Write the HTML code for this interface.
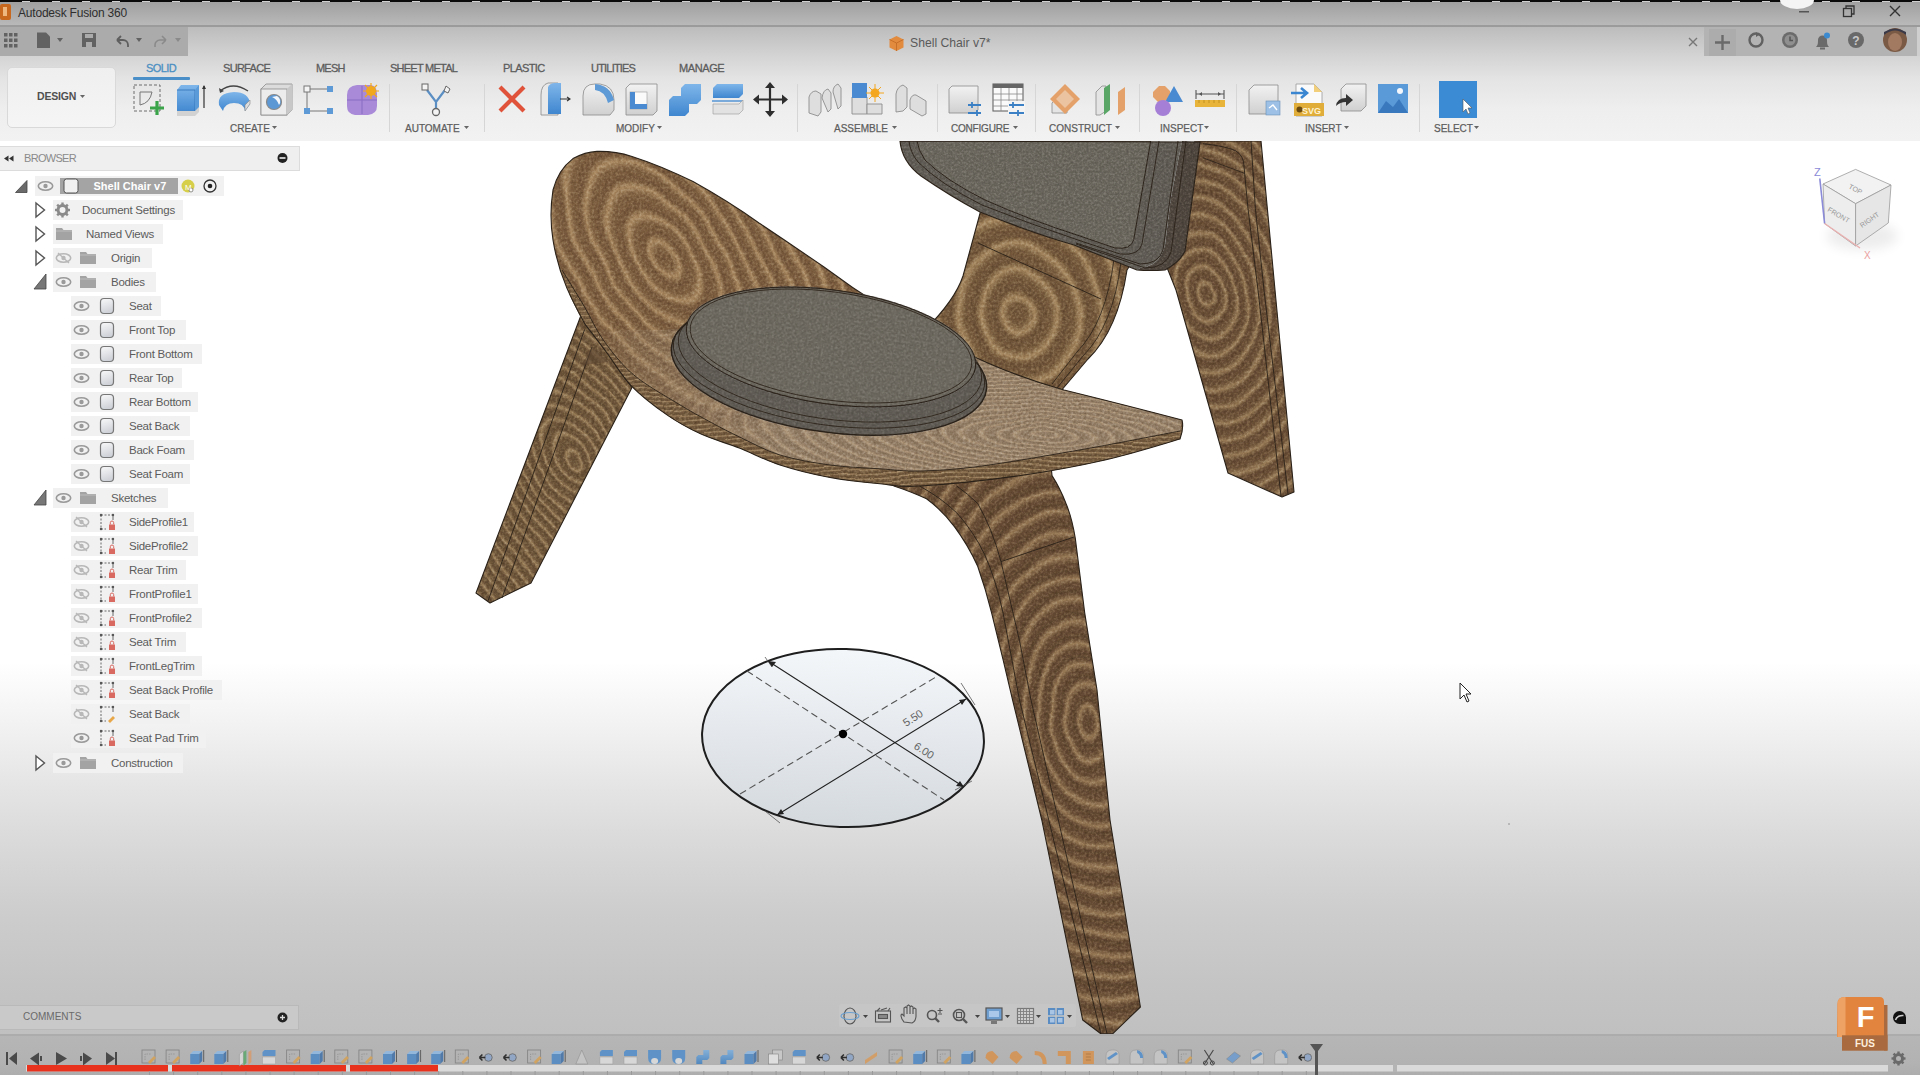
<!DOCTYPE html>
<html><head><meta charset="utf-8"><style>
*{box-sizing:border-box}
body{margin:0;width:1920px;height:1075px;overflow:hidden;position:relative;font-family:"Liberation Sans",sans-serif;background:#fff;color:#555}
.a{position:absolute}
.t{position:absolute;white-space:nowrap;line-height:1}
.tab{font-size:11px;color:#5c5c5c;top:62.5px;letter-spacing:-0.5px;-webkit-text-stroke:0.3px #5c5c5c}
.gl{font-size:10px;color:#5e5e5e;top:123.5px;-webkit-text-stroke:0.25px #5e5e5e}
.sep{position:absolute;width:1px;background:#d6d6d6;top:84px;height:48px}
.row{position:absolute;height:19px;background:rgba(226,226,226,0.55)}
.lbl{position:absolute;font-size:11px;color:#555;line-height:1;white-space:nowrap}
</style></head><body>
<div class="a" style="left:0;top:140px;width:1920px;height:895px;background:linear-gradient(to bottom,#ffffff 0px,#ffffff 522px,#f3f3f3 580px,#e6e6e6 640px,#dadada 700px,#cdcdcd 772px,#c4c4c4 845px,#c0c0c0 895px)"></div>
<svg class="a" style="left:0;top:0" width="1920" height="1075" viewBox="0 0 1920 1075">
<defs>
<path id="p_rear" d="M1195 141L1261 141L1275 290L1294 492L1282 497L1228 473L1176 290L1160 250Z"/>
<clipPath id="c_rear"><use href="#p_rear"/></clipPath>
<path id="p_mid" d="M985 195L1140 250L1127 270Q1118 330 1088 359L1060 392L1000 405L925 330Q955 300 963 276Z"/>
<clipPath id="c_mid"><use href="#p_mid"/></clipPath>
<path id="p_cushB" d="M900 141Q902 162 921 176Q950 196 980 212Q1030 232 1074 245L1137 270Q1150 271 1165 270Q1180 262 1185 251L1200 142Z"/>
<clipPath id="c_cushB"><use href="#p_cushB"/></clipPath>
<path id="p_front" d="M885 465L894 486Q912 492 926.5 498.8Q942 510 954.4 526.7Q968 545 977.7 566.3Q986 590 991.6 612.8L1003 659.3L1012.6 700L1041.8 820L1082.7 1020L1100.9 1033.8L1112.6 1033.8L1140.4 1007L1110 820L1097 690L1084.7 612.8L1075.3 538.4Q1072 518 1066 503.5Q1060 488 1052 475.6L1050 455Z"/>
<clipPath id="c_front"><use href="#p_front"/></clipPath>
<path id="p_left" d="M583 310L476 593L490 603L531 583L632 387.6L607 350Z"/>
<clipPath id="c_left"><use href="#p_left"/></clipPath>
<path id="p_seat" d="M597 151.4Q615 151 632 156.4Q662 166 693 181.6Q728 201 759 223Q792 245 824 267Q852 288 881 306Q903 318 925 322L960 350Q1010 375 1064 390Q1125 405 1182 420Q1184 428 1180 439C1167.5 442.5 1131.8 453.9 1105.0 460.0 C1078.2 466.1 1049.8 471.4 1019.0 475.7 C988.2 480.0 943.2 484.6 920.0 486.0 C896.8 487.4 895.0 485.2 880.0 483.8 C865.0 482.4 846.7 480.6 830.0 477.5 C813.3 474.4 795.0 469.9 780.0 465.0 C765.0 460.1 753.2 453.5 740.0 448.3 C726.8 443.1 712.7 439.4 700.5 433.8 C688.3 428.2 678.5 422.9 667.0 414.9 C655.5 406.9 641.3 396.1 631.3 385.8 C621.3 375.5 614.8 363.4 607.0 353.0 C599.2 342.6 588.3 328.5 584.6 323.6Q572 300 566.8 287.9Q557 265 553 240Q549 215 553 190Q558 170 573 158.6Q585 152 597 151.4Z"/>
<clipPath id="c_seat"><use href="#p_seat"/></clipPath>
<path id="p_band" d="M1182 420Q1184 428 1180 439C1167.5 442.5 1131.8 453.9 1105.0 460.0 C1078.2 466.1 1049.8 471.4 1019.0 475.7 C988.2 480.0 943.2 484.6 920.0 486.0 C896.8 487.4 895.0 485.2 880.0 483.8 C865.0 482.4 846.7 480.6 830.0 477.5 C813.3 474.4 795.0 469.9 780.0 465.0 C765.0 460.1 753.2 453.5 740.0 448.3 C726.8 443.1 712.7 439.4 700.5 433.8 C688.3 428.2 678.5 422.9 667.0 414.9 C655.5 406.9 641.3 396.1 631.3 385.8 C621.3 375.5 614.8 363.4 607.0 353.0 C599.2 342.6 590.8 333.1 584.6 323.6 C578.4 314.1 572.4 300.6 570.0 296.0L562 270C565.8 276.2 577.7 295.3 584.6 307.0 C591.5 318.7 595.1 328.7 603.3 340.0 C611.4 351.3 621.0 364.1 633.5 374.7 C646.0 385.3 665.0 395.7 678.0 403.7 C691.0 411.7 701.3 417.1 711.6 422.7 C721.9 428.3 728.6 431.8 740.0 437.2 C751.4 442.6 765.0 450.4 780.0 455.0 C795.0 459.6 813.3 462.7 830.0 465.0 C846.7 467.3 865.0 467.8 880.0 468.8 C895.0 469.8 903.0 471.5 920.0 471.0 C937.0 470.5 954.5 469.7 982.0 466.0 C1009.5 462.3 1052.0 454.8 1085.0 449.0 C1118.0 443.2 1164.2 434.0 1180.0 431.0Z"/>
<clipPath id="c_band"><use href="#p_band"/></clipPath>
<path id="p_seatTop" d="M1182 420L1180 431C1164.2 434.0 1118.0 443.2 1085.0 449.0 C1052.0 454.8 1009.5 462.3 982.0 466.0 C954.5 469.7 937.0 470.5 920.0 471.0 C903.0 471.5 895.0 469.8 880.0 468.8 C865.0 467.8 846.7 467.3 830.0 465.0 C813.3 462.7 795.0 459.6 780.0 455.0 C765.0 450.4 751.4 442.6 740.0 437.2 C728.6 431.8 721.9 428.3 711.6 422.7 C701.3 417.1 691.0 411.7 678.0 403.7 C665.0 395.7 646.0 385.3 633.5 374.7 C621.0 364.1 611.4 351.3 603.3 340.0 C595.1 328.7 591.5 318.7 584.6 307.0 C577.7 295.3 565.8 276.2 562.0 270.0L700 280L960 350Q1010 375 1064 390Q1125 405 1182 420Z"/>
<clipPath id="c_seatTop"><use href="#p_seatTop"/></clipPath>
<radialGradient id="gSeat" gradientUnits="userSpaceOnUse" cx="0" cy="0" r="30" spreadMethod="repeat" gradientTransform="translate(664 258) rotate(55) scale(1 0.5)">
<stop offset="0" stop-color="#76583b"/><stop offset="0.42" stop-color="#7f6041"/><stop offset="0.7" stop-color="#ab8b63"/><stop offset="0.92" stop-color="#7f6041"/><stop offset="1" stop-color="#76583b"/></radialGradient>
<radialGradient id="gSeatR" gradientUnits="userSpaceOnUse" cx="0" cy="0" r="18" spreadMethod="repeat" gradientTransform="translate(1046 436) rotate(3) scale(1 0.22)">
<stop offset="0" stop-color="#8c765f"/><stop offset="0.42" stop-color="#957f67"/><stop offset="0.7" stop-color="#ae977a"/><stop offset="0.92" stop-color="#957f67"/><stop offset="1" stop-color="#8c765f"/></radialGradient>
<radialGradient id="gBand" gradientUnits="userSpaceOnUse" cx="0" cy="0" r="22" spreadMethod="repeat" gradientTransform="translate(1010 600) rotate(0) scale(1 0.2)">
<stop offset="0" stop-color="#6a5238"/><stop offset="0.42" stop-color="#735a3e"/><stop offset="0.7" stop-color="#a08460"/><stop offset="0.92" stop-color="#735a3e"/><stop offset="1" stop-color="#6a5238"/></radialGradient>
<radialGradient id="gRear" gradientUnits="userSpaceOnUse" cx="0" cy="0" r="17" spreadMethod="repeat" gradientTransform="translate(1205 294) rotate(80) scale(1 0.65)">
<stop offset="0" stop-color="#654b34"/><stop offset="0.42" stop-color="#6d5238"/><stop offset="0.7" stop-color="#9c7f5a"/><stop offset="0.92" stop-color="#6d5238"/><stop offset="1" stop-color="#654b34"/></radialGradient>
<radialGradient id="gMid" gradientUnits="userSpaceOnUse" cx="0" cy="0" r="26" spreadMethod="repeat" gradientTransform="translate(1018 314) rotate(75) scale(1 0.85)">
<stop offset="0" stop-color="#6e5339"/><stop offset="0.42" stop-color="#775b3c"/><stop offset="0.7" stop-color="#a88a62"/><stop offset="0.92" stop-color="#775b3c"/><stop offset="1" stop-color="#6e5339"/></radialGradient>
<radialGradient id="gFront" gradientUnits="userSpaceOnUse" cx="0" cy="0" r="22" spreadMethod="repeat" gradientTransform="translate(1087 724) rotate(80) scale(1 0.6)">
<stop offset="0" stop-color="#604732"/><stop offset="0.42" stop-color="#684d35"/><stop offset="0.7" stop-color="#9a7c58"/><stop offset="0.92" stop-color="#684d35"/><stop offset="1" stop-color="#604732"/></radialGradient>
<radialGradient id="gLeft" gradientUnits="userSpaceOnUse" cx="0" cy="0" r="16" spreadMethod="repeat" gradientTransform="translate(573 458) rotate(60) scale(1 0.55)">
<stop offset="0" stop-color="#675036"/><stop offset="0.42" stop-color="#6e553a"/><stop offset="0.7" stop-color="#9e825c"/><stop offset="0.92" stop-color="#6e553a"/><stop offset="1" stop-color="#675036"/></radialGradient>
<linearGradient id="sketchFill" x1="0" y1="0" x2="0" y2="1"><stop offset="0" stop-color="#f4f7fa"/><stop offset="1" stop-color="#d4d9de"/></linearGradient>
<linearGradient id="fadeR" gradientUnits="userSpaceOnUse" x1="580" y1="0" x2="780" y2="0"><stop offset="0" stop-color="#fff" stop-opacity="0"/><stop offset="1" stop-color="#fff" stop-opacity="1"/></linearGradient>
<mask id="mSeatR"><rect x="600" y="300" width="700" height="200" fill="url(#fadeR)"/></mask>
<filter id="wob" x="-10%" y="-10%" width="120%" height="120%"><feTurbulence type="fractalNoise" baseFrequency="0.018" numOctaves="2" seed="7" result="n"/><feDisplacementMap in="SourceGraphic" in2="n" scale="9" xChannelSelector="R" yChannelSelector="G" result="d"/><feTurbulence type="fractalNoise" baseFrequency="0.38" numOctaves="2" seed="2" result="g"/><feColorMatrix in="g" type="matrix" values="0.6 0 0 0 0.2  0.6 0 0 0 0.2  0.6 0 0 0 0.2  0 0 0 0 1" result="gg"/><feBlend in="gg" in2="d" mode="soft-light" result="b"/><feComposite in="b" in2="d" operator="in"/></filter>
<filter id="grainC" x="0" y="0" width="100%" height="100%"><feTurbulence type="fractalNoise" baseFrequency="0.45" numOctaves="2" seed="11" result="g"/><feColorMatrix in="g" type="matrix" values="0.45 0 0 0 0.28  0.45 0 0 0 0.28  0.45 0 0 0 0.28  0 0 0 0 1" result="gg"/><feBlend in="gg" in2="SourceGraphic" mode="soft-light" result="b"/><feComposite in="b" in2="SourceGraphic" operator="in"/></filter>
<filter id="blurS" x="-50%" y="-50%" width="200%" height="200%"><feGaussianBlur stdDeviation="6"/></filter>
</defs>
<g clip-path="url(#c_rear)"><rect x="1140" y="130" width="170" height="380" fill="url(#gRear)" filter="url(#wob)"/></g>
<use href="#p_rear" fill="none" stroke="#2a2118" stroke-width="1.1" stroke-linejoin="round"/>
<path d="M1203 143.7Q1225 146 1235.6 150.7Q1244 156 1244 166.3L1248 208.7L1258 290L1281 496" fill="none" stroke="#2a2118" stroke-width="0.9"/>
<path d="M1251 141L1255.4 208.7L1264 290L1288 494" fill="none" stroke="#2a2118" stroke-width="0.9"/>
<path d="M1203 157.8L1244.8 173.4" fill="none" stroke="#2a2118" stroke-width="0.8"/>
<g clip-path="url(#c_mid)"><rect x="910" y="180" width="240" height="240" fill="url(#gMid)" filter="url(#wob)"/></g>
<use href="#p_mid" fill="none" stroke="#2a2118" stroke-width="1.1" stroke-linejoin="round"/>
<path d="M978 243L1101 299" fill="none" stroke="#2a2118" stroke-width="0.9"/>
<path d="M1121 262Q1113 326 1083 356L1057 388" fill="none" stroke="#2a2118" stroke-width="0.8"/>
<path d="M1114 259Q1106 322 1077 352L1052 384" fill="none" stroke="#2a2118" stroke-width="0.8"/>
<use href="#p_cushB" fill="#5f5b54" filter="url(#grainC)"/>
<path d="M1150.7 141L1133.7 239.8Q1131 250 1115 248L1080 236Q1030 220 985 200Q945 180 925 160Q918 150 917 141Z" fill="#69655c" filter="url(#grainC)"/>
<path d="M1182 141Q1176 170 1170.5 200L1165 245Q1160 266 1140 268L1137 270Q1150 271 1165 270Q1180 262 1185 251L1200 142Z" fill="#4d453d" filter="url(#grainC)"/>
<use href="#p_cushB" fill="none" stroke="#2a2118" stroke-width="1.2" stroke-linejoin="round"/>
<path d="M1150.7 141L1133.7 239.8Q1131 250 1115 248L1080 236Q1030 220 985 200Q945 180 925 160Q918 150 917 141" fill="none" stroke="#2a2118" stroke-width="1.0"/>
<path d="M1159 141L1142 244Q1139 256 1120 254L1078 240Q1030 224 982 205Q940 184 918 162Q910 152 909 141" fill="none" stroke="#2a2118" stroke-width="0.9"/>
<path d="M1178 141L1163 250Q1159 264 1140 264L1076 243" fill="none" stroke="#2a2118" stroke-width="0.9"/>
<path d="M1186 141L1171 252Q1166 268 1145 268L1076 244" fill="none" stroke="#2a2118" stroke-width="0.9"/>
<g clip-path="url(#c_front)"><rect x="880" y="450" width="270" height="590" fill="url(#gFront)" filter="url(#wob)"/></g>
<use href="#p_front" fill="none" stroke="#2a2118" stroke-width="1.1" stroke-linejoin="round"/>
<path d="M919.5 486Q940 497 956.7 512.8Q974 532 984.7 554.7Q996 580 1003 612.8L1019.5 700L1100.9 1033.8" fill="none" stroke="#2a2118" stroke-width="0.9"/>
<path d="M956.7 486Q968 494 977.7 503.5Q992 528 1001 561.6L1019.5 640.7L1031 700L1107 1033.8" fill="none" stroke="#2a2118" stroke-width="0.9"/>
<path d="M1001 561.6L1074 537" fill="none" stroke="#2a2118" stroke-width="0.9"/>
<g clip-path="url(#c_left)"><rect x="460" y="300" width="190" height="320" fill="url(#gLeft)" filter="url(#wob)"/></g>
<use href="#p_left" fill="none" stroke="#2a2118" stroke-width="1.1" stroke-linejoin="round"/>
<path d="M584.6 329.5L488 601" fill="none" stroke="#2a2118" stroke-width="0.9"/>
<path d="M592 347L502 598" fill="none" stroke="#2a2118" stroke-width="0.9"/>
<path d="M581.7 365L608.5 362L592 347Z" fill="#5a4430" opacity="0.6"/>
<g clip-path="url(#c_seat)"><rect x="540" y="140" width="660" height="360" fill="url(#gSeat)" filter="url(#wob)"/></g>
<g clip-path="url(#c_band)"><rect x="540" y="260" width="660" height="240" fill="url(#gBand)" filter="url(#wob)"/></g>
<g clip-path="url(#c_seatTop)" mask="url(#mSeatR)"><rect x="600" y="330" width="600" height="160" fill="url(#gSeatR)" filter="url(#wob)"/></g>
<use href="#p_seat" fill="none" stroke="#2a2118" stroke-width="1.1" stroke-linejoin="round"/>
<path d="M1180 431C1164.2 434.0 1118.0 443.2 1085.0 449.0 C1052.0 454.8 1009.5 462.3 982.0 466.0 C954.5 469.7 937.0 470.5 920.0 471.0 C903.0 471.5 895.0 469.8 880.0 468.8 C865.0 467.8 846.7 467.3 830.0 465.0 C813.3 462.7 795.0 459.6 780.0 455.0 C765.0 450.4 751.4 442.6 740.0 437.2 C728.6 431.8 721.9 428.3 711.6 422.7 C701.3 417.1 691.0 411.7 678.0 403.7 C665.0 395.7 646.0 385.3 633.5 374.7 C621.0 364.1 611.4 351.3 603.3 340.0 C595.1 328.7 591.5 318.7 584.6 307.0 C577.7 295.3 565.8 276.2 562.0 270.0" fill="none" stroke="#2a2118" stroke-width="0.9"/>
<g stroke="#2a2118" stroke-linejoin="round">
<ellipse cx="829" cy="368" rx="159" ry="64" transform="rotate(8 829 368)" fill="#5e5a53" stroke-width="1.2" filter="url(#grainC)"/>
<ellipse cx="829" cy="368" rx="159" ry="64" transform="rotate(8 829 368)" fill="none" stroke-width="1.2"/>
<ellipse cx="829" cy="364" rx="157" ry="61" transform="rotate(8 829 364)" fill="none" stroke-width="0.8"/>
<ellipse cx="830" cy="359" rx="153" ry="60" transform="rotate(8 830 359)" fill="none" stroke-width="0.8"/>
<ellipse cx="831" cy="347" rx="146" ry="57" transform="rotate(8 831 347)" fill="#6b675e" filter="url(#grainC)"/>
<ellipse cx="831" cy="347" rx="146" ry="57" transform="rotate(8 831 347)" fill="none" stroke-width="0.9"/>
<ellipse cx="831" cy="346" rx="142" ry="54" transform="rotate(8 831 346)" fill="none" stroke-width="0.8"/>
</g>
<g>
<ellipse cx="843" cy="738" rx="141" ry="89" transform="rotate(2 843 738)" fill="url(#sketchFill)" stroke="#1e1e1e" stroke-width="2"/>
<path d="M747 671L944 800M740 794L936 677" stroke="#555" stroke-width="1.1" stroke-dasharray="7 4" fill="none"/>
<path d="M768 661L964 787M777 815L966 699" stroke="#222" stroke-width="1.1" fill="none"/>
<path d="M765 657L772 667M961 683L975 705M955 790L972 781M765 811L780 823" stroke="#555" stroke-width="0.8" fill="none"/>
<path d="M768 661l8 1-4 5zM964 787l-8-1 4-5zM777 815l4-6 3 5zM966 699l-4 6-3-5z" fill="#222"/>
<circle cx="843" cy="734" r="4.2" fill="#000"/>
<text x="0" y="0" font-size="11" fill="#666" font-family="Liberation Sans" transform="translate(906 727) rotate(-33)">5.50</text>
<text x="0" y="0" font-size="11" fill="#666" font-family="Liberation Sans" transform="translate(913 748) rotate(33)">6.00</text>
</g>
<g>
<ellipse cx="1862" cy="236" rx="36" ry="14" fill="#000" opacity="0.07" filter="url(#blurS)"/>
<path d="M1823 184L1855.6 169.4L1891 185L1855.6 203.7Z" fill="#f2f2f2" stroke="#9a9a9a" stroke-width="0.8"/>
<path d="M1823 184L1855.6 203.7L1855.6 246L1824.6 223.5Z" fill="#ededed" stroke="#9a9a9a" stroke-width="0.8"/>
<path d="M1855.6 203.7L1891 185L1888.3 223L1855.6 246Z" fill="#e6e6e6" stroke="#9a9a9a" stroke-width="0.8"/>
<path d="M1824.6 223.5L1819.8 178.5" stroke="#8a8ad8" stroke-width="1.6"/>
<path d="M1824.6 223.5L1860 248" stroke="#eab0b0" stroke-width="1.4"/>
<text x="1814" y="176" font-size="11" fill="#8a8ad8" font-family="Liberation Sans">Z</text>
<text x="1864" y="259" font-size="10" fill="#eaa0a0" font-family="Liberation Sans">X</text>
<text font-size="7" fill="#999" font-family="Liberation Sans" transform="translate(1848 188) rotate(28)">TOP</text>
<text font-size="7" fill="#999" font-family="Liberation Sans" transform="translate(1827 211) rotate(30)">FRONT</text>
<text font-size="7" fill="#999" font-family="Liberation Sans" transform="translate(1862 228) rotate(-35)">RIGHT</text>
</g>
<path d="M1460 683v16l4-4 3 7 2-1-3-7h5z" fill="#fff" stroke="#222" stroke-width="1"/>
<circle cx="1509" cy="824" r="0.8" fill="#888"/>
</svg>
<!-- title bar -->
<div class="a" style="left:0;top:0;width:1920px;height:25px;background:linear-gradient(#a0a0a0 2px,#b9b9b9 25px)"></div>
<div class="a" style="left:0;top:0;width:1920px;height:2px;background:repeating-linear-gradient(90deg,#0a0a0a 0 22px,#cfcfcf 22px 30px)"></div><div class="a" style="left:0;top:0;width:1920px;height:1px;background:#0a0a0a"></div>
<div class="a" style="left:0;top:25px;width:1920px;height:3px;background:#9b9b9b"></div>
<div class="t" style="left:18px;top:7px;font-size:12px;color:#2e2e2e;letter-spacing:-0.2px">Autodesk Fusion 360</div>
<div class="a" style="left:0;top:27px;width:1920px;height:114px;background:linear-gradient(#bcbcbc 0px,#d3d3d3 28px,#e4e4e4 52px,#eeeeee 82px,#f2f2f2 113px)"></div>
<!-- QAT -->
<div class="a" style="left:0;top:27px;width:188px;height:29px;background:#ababab"></div>
<div class="a" style="left:1704px;top:27px;width:213px;height:29px;background:#b3b3b3"></div>
<div class="a" style="left:1709px;top:29px;width:27px;height:27px;background:#acacac"></div>
<div class="a" style="left:1917px;top:27px;width:3px;height:29px;background:#cfcfcf"></div>
<div class="t" style="left:910px;top:37px;font-size:12.2px;color:#5a5a5a">Shell Chair v7*</div>
<!-- ribbon -->
<div class="a" style="left:7px;top:67px;width:109px;height:61px;border:1px solid #d9d9d9;border-radius:5px;background:linear-gradient(#efefef,#f5f5f5)"></div>
<div class="t" style="left:37px;top:91px;font-size:10.5px;font-weight:bold;color:#505050;letter-spacing:-0.2px">DESIGN</div>
<div class="t tab" style="left:146px;color:#4b8fc2;-webkit-text-stroke:0.3px #4b8fc2;letter-spacing:-0.6px">SOLID</div>
<div class="a" style="left:133px;top:77px;width:57px;height:3px;background:#4a8fc8;border-radius:1px"></div>
<div class="t tab" style="left:223px;letter-spacing:-0.7px">SURFACE</div>
<div class="t tab" style="left:316px;letter-spacing:-0.8px">MESH</div>
<div class="t tab" style="left:390px;letter-spacing:-0.75px">SHEET METAL</div>
<div class="t tab" style="left:503px;letter-spacing:-0.6px">PLASTIC</div>
<div class="t tab" style="left:591px;letter-spacing:-0.8px">UTILITIES</div>
<div class="t tab" style="left:679px;letter-spacing:-0.4px">MANAGE</div>
<div class="t gl" style="left:230px">CREATE</div>
<div class="t gl" style="left:405px">AUTOMATE</div>
<div class="t gl" style="left:616px">MODIFY</div>
<div class="t gl" style="left:834px">ASSEMBLE</div>
<div class="t gl" style="left:951px;letter-spacing:-0.2px">CONFIGURE</div>
<div class="t gl" style="left:1049px">CONSTRUCT</div>
<div class="t gl" style="left:1160px">INSPECT</div>
<div class="t gl" style="left:1305px">INSERT</div>
<div class="t gl" style="left:1434px">SELECT</div>
<div class="sep" style="left:389px"></div>
<div class="sep" style="left:484px"></div>
<div class="sep" style="left:797px"></div>
<div class="sep" style="left:937px"></div>
<div class="sep" style="left:1035px"></div>
<div class="sep" style="left:1139px"></div>
<div class="sep" style="left:1236px"></div>
<div class="sep" style="left:1419px"></div>
<svg class="a" style="left:0;top:0" width="1920" height="141" viewBox="0 0 1920 141">
<defs>
<linearGradient id="gb" x1="0" y1="0" x2="0" y2="1"><stop offset="0" stop-color="#7fb6ea"/><stop offset="1" stop-color="#3f86cf"/></linearGradient>
<linearGradient id="gg" x1="0" y1="0" x2="0" y2="1"><stop offset="0" stop-color="#f2f2f2"/><stop offset="1" stop-color="#d0d0d0"/></linearGradient>
</defs>
<!-- app icon -->
<rect x="0" y="4" width="11" height="16" rx="2" fill="#c8681e"/><rect x="3" y="7" width="4" height="9" fill="#eeb77f"/>
<!-- window controls -->
<ellipse cx="1797" cy="0" rx="17" ry="9" fill="#f4f4f4"/>
<rect x="1799" y="11" width="10" height="1.5" fill="#555"/>
<rect x="1843.5" y="8.5" width="8" height="8" fill="none" stroke="#333" stroke-width="1.3"/><path d="M1846 8.5V6h8v8h-2.5" fill="none" stroke="#333" stroke-width="1.3"/>
<path d="M1890 6l10 10M1900 6l-10 10" stroke="#333" stroke-width="1.4"/>
<!-- QAT icons -->
<g fill="#626262">
<rect x="4" y="33" width="3.5" height="3.5"/><rect x="9" y="33" width="3.5" height="3.5"/><rect x="14" y="33" width="3.5" height="3.5"/>
<rect x="4" y="38.5" width="3.5" height="3.5"/><rect x="9" y="38.5" width="3.5" height="3.5"/><rect x="14" y="38.5" width="3.5" height="3.5"/>
<rect x="4" y="44" width="3.5" height="3.5"/><rect x="9" y="44" width="3.5" height="3.5"/><rect x="14" y="44" width="3.5" height="3.5"/>
<path d="M37 32.5h9l4 4v11.5h-13z"/>
<path d="M57 38h6l-3 4z"/>
<path d="M82 33h14v14h-14z M85 34v4h8v-4z M86 42v5h6v-5z" fill-rule="evenodd"/>
<path d="M136 38h6l-3 4z"/>
</g>
<path d="M117 40l4-4M117 40l4 4M117 40h6a5 5 0 0 1 5 5v2" fill="none" stroke="#5e5e5e" stroke-width="1.8"/>
<path d="M166 40l-4-4M166 40l-4 4M166 40h-6a5 5 0 0 0 -5 5v2" fill="none" stroke="#8a8a8a" stroke-width="1.6"/>
<path d="M175 38h6l-3 4z" fill="#8a8a8a"/>
<!-- doc tab icon -->
<path d="M889.5 39.5l7-3.5 7 3.5v8l-7 3.5-7-3.5z" fill="#e28a3e"/><path d="M889.5 39.5l7 3.5 7-3.5M896.5 43v8" stroke="#c06a24" fill="none" stroke-width="0.8"/>
<path d="M1689 38l8 8M1697 38l-8 8" stroke="#777" stroke-width="1.4"/>
<!-- right icons -->
<path d="M1722.5 35v15M1715 42.5h15" stroke="#6a6a6a" stroke-width="2.4"/>
<circle cx="1756" cy="40" r="6.5" fill="none" stroke="#616161" stroke-width="2.4"/><path d="M1756 32l3 3-3 2z" fill="#616161"/>
<circle cx="1790" cy="40" r="8" fill="#6b6b6b"/><circle cx="1790" cy="40" r="5.5" fill="#8f8f8f"/><path d="M1790 36.5v4h3" stroke="#555" stroke-width="1.5" fill="none"/>
<path d="M1816 47c2-2 2-4 2-7a4.5 4.5 0 0 1 9 0c0 3 0 5 2 7z" fill="#6a6a6a"/><rect x="1820" y="47.5" width="5" height="2" fill="#6a6a6a"/><circle cx="1827" cy="35.5" r="3" fill="#3b8ad0"/>
<circle cx="1856" cy="40" r="8" fill="#696969"/><text x="1856" y="44.5" font-size="12" font-weight="bold" text-anchor="middle" fill="#c9c9c9" font-family="Liberation Sans">?</text>
<circle cx="1895" cy="40" r="12" fill="#7b5a45"/><ellipse cx="1895" cy="42" rx="7" ry="9" fill="#a27a62"/><path d="M1884 35q11-9 22 0v-3q-11-7-22 0z" fill="#3a3a48"/>
<!-- CREATE icons -->
<g>
<rect x="134" y="85" width="26" height="26" fill="none" stroke="#6d6d6d" stroke-width="1" stroke-dasharray="3 2"/>
<path d="M140 105v-13h12" fill="none" stroke="#777" stroke-width="1"/><path d="M140 105q10-2 12-13" fill="none" stroke="#777" stroke-width="1"/>
<path d="M157 101v14M150 108h14" stroke="#3aa44a" stroke-width="3.2"/>
<path d="M177 90l4-5h18v23l-4 5h-18z" fill="url(#gb)"/><path d="M177 90h18v23" fill="none" stroke="#2f6fb5" stroke-width="0.8"/><path d="M195 90l4-5v23l-4 5z" fill="#5a9ad8"/>
<path d="M177 111h18l4-4v5l-4 4h-18z" fill="#d2d2d2"/>
<path d="M204 86v22" stroke="#333" stroke-width="1.2"/><path d="M202 89l2-4 2 4z" fill="#333"/>
<path d="M219 105q-2-12 15-13q15 0 16 12l-5 7q-1-8-11-8q-9 0-11 8z" fill="url(#gb)"/><path d="M245 111l5-7v-4l-5 5z" fill="#ddd" stroke="#888" stroke-width="0.6"/>
<path d="M220 91q13-10 28 0" fill="none" stroke="#444" stroke-width="1.3"/><path d="M219 88l1 5 4-2z" fill="#444"/>
<path d="M261 89l5-5h26v26l-5 5h-26z" fill="#dcdcdc" stroke="#8c8c8c" stroke-width="0.8"/><rect x="261" y="89" width="26" height="26" fill="#ececec" stroke="#8c8c8c" stroke-width="0.8"/><path d="M287 89l5-5v26l-5 5z" fill="#c8c8c8"/><circle cx="274" cy="102" r="7.5" fill="#5b98d4" stroke="#8a8a8a" stroke-width="1.2"/><path d="M277 96a6 6 0 0 1 2 9q-2-6-7-8z" fill="#f4f8fc"/>
<rect x="304" y="86" width="6" height="6" fill="#f4f4f4" stroke="#777" stroke-width="1"/><rect x="327" y="86" width="6" height="6" fill="#5e9ad6"/><rect x="304" y="108" width="6" height="6" fill="#5e9ad6"/><rect x="327" y="108" width="6" height="6" fill="#5e9ad6"/>
<path d="M310 89h17M307 92v16M310 111h17" stroke="#777" stroke-width="1"/>
<path d="M347 95q0-9 10-10h14q6 1 6 9v12q0 8-9 9h-13q-8-1-8-9z" fill="#a88ad8"/><path d="M347 100h30M362 86v28" stroke="#8a6cc4" stroke-width="1"/>
<circle cx="371" cy="91" r="5" fill="#f2a81d"/><path d="M371 83v16M363 91h16M365 85l12 12M377 85l-12 12" stroke="#f2a81d" stroke-width="1.2"/>
</g>
<!-- AUTOMATE -->
<g fill="none" stroke="#5b8fc4" stroke-width="2.2">
<path d="M427 90l9 12l9-12M436 102v8"/>
</g>
<rect x="422" y="84" width="6" height="6" fill="#f4f4f4" stroke="#666" stroke-width="1"/><path d="M446 86l4 3-2 4-4-2z" fill="#f4f4f4" stroke="#666" stroke-width="1"/><circle cx="436" cy="112" r="3.5" fill="#f4f4f4" stroke="#666" stroke-width="1.3"/>
<!-- MODIFY -->
<path d="M500 87l24 24M524 87l-24 24" stroke="#e0533a" stroke-width="4.2"/>
<path d="M541 95q0-10 7-12h10v32h-17z" fill="#e9e9e9" stroke="#888" stroke-width="0.8"/><path d="M548 87q2-4 7-4h6v31h-13z" fill="url(#gb)"/><path d="M560 99h9M567 97l3 2-3 2" stroke="#333" stroke-width="1.1" fill="none"/>
<path d="M583 96q0-12 12-12h5q14 2 14 16v10l-4 5h-27z" fill="url(#gg)" stroke="#8a8a8a" stroke-width="0.8"/><path d="M595 84q15 1 19 16l-6 3q-3-12-13-13z" fill="#5e9ad6"/>
<path d="M626 88l4-4h27v27l-4 4h-27z" fill="url(#gg)" stroke="#8a8a8a" stroke-width="0.8"/><rect x="630" y="92" width="17" height="17" fill="#fafafa" stroke="#999" stroke-width="0.6"/><path d="M630 92h5v12h12v5h-17z" fill="#4a8ad0"/>
<path d="M669 100l4-4h8v-8l4-4h16v16l-4 4h-8v8l-4 4h-16z" fill="url(#gb)"/>
<path d="M713 88l4-4h26v10l-4 4h-26z" fill="url(#gb)"/><path d="M712 101h31" stroke="#5e9ad6" stroke-width="1.6"/><path d="M713 104h26l4-4v10l-4 4h-26z" fill="#e2e2e2" stroke="#999" stroke-width="0.6"/>
<path d="M770 84v31M755 99.5h31" stroke="#2e2e2e" stroke-width="2.2"/><path d="M770 82l-5 6h10zM770 117l-5-6h10zM753 99.5l6-5v10zM788 99.5l-6-5v10z" fill="#2e2e2e"/>
<!-- ASSEMBLE -->
<g fill="#dedede" stroke="#8d8d8d" stroke-width="0.9">
<path d="M809 113v-16q2-6 7-6l5 3v18l-3 4zM822 98q1-8 6-9l3 4v16l-3 3z M833 92q0-6 5-8l3 4v18l-3 3z"/>
<path d="M852 97h15v17h-15z"/><path d="M867 104h15v10h-15z"/>
<path d="M896 112v-18q1-7 7-9l4 3v19l-4 4z M910 100q2-6 6-5l10 6v13l-4 2-12-7z"/>
</g>
<path d="M852 83h15v15h-15z" fill="#4a8ad0"/><circle cx="875" cy="93" r="4.5" fill="#f3a61f"/><path d="M875 84v18M866 93h18M869 87l12 12M881 87l-12 12" stroke="#f3a61f" stroke-width="1"/>
<!-- CONFIGURE -->
<path d="M949 89l3-3h26v24l-3 3h-26z" fill="url(#gg)" stroke="#8a8a8a" stroke-width="0.8"/><path d="M968 105h13M968 113h13M972 102v6M977 110v6" stroke="#3b7fc4" stroke-width="1.8"/>
<rect x="993" y="84" width="30" height="27" fill="#fafafa" stroke="#666" stroke-width="1.1"/><rect x="993" y="84" width="30" height="4" fill="#666"/><path d="M993 94h30M993 100h30M993 106h30M1001 88v23M1009 88v23M1017 88v23" stroke="#888" stroke-width="0.8"/><rect x="1008" y="101" width="17" height="14" fill="#f4f4f4"/><path d="M1009 105h15M1009 113h15M1013 102v6M1018 110v6" stroke="#3b7fc4" stroke-width="1.8"/>
<!-- CONSTRUCT -->
<path d="M1052 103l5-5h10v15h-15z" fill="#e4e4e4" stroke="#8a8a8a" stroke-width="0.8"/><path d="M1065 84l15 15-15 15-15-15z" fill="#e4a26a"/><path d="M1065 90l9 9-9 9-9-9z" fill="#f4f4f4" opacity="0.4"/>
<path d="M1096 92l6-6h4v25l-6 4h-4z" fill="#e4e4e4" stroke="#8a8a8a" stroke-width="0.8"/><path d="M1104 88l6-4v26l-6 5z" fill="#59a667"/><path d="M1118 92l7-5v23l-7 5z" fill="#e4a26a"/>
<!-- INSPECT -->
<path d="M1153 92l6-6h6l5 5v6l-6 5h-6l-5-5z" fill="#e4a26a"/><path d="M1174 86l9 16h-18z" fill="#4a8ad0"/><circle cx="1163" cy="108" r="8" fill="#a57fd6"/>
<path d="M1196 94h28M1196 90v9M1224 90v9" stroke="#555" stroke-width="1.1"/><path d="M1199 94l3-2v4zM1221 94l-3-2v4z" fill="#555"/><rect x="1195" y="100" width="30" height="7" fill="#e8b43a"/><path d="M1199 100v3M1204 100v3M1209 100v3M1214 100v3M1219 100v3" stroke="#b88a1a" stroke-width="0.8"/>
<!-- INSERT -->
<path d="M1249 90l5-5h24v24l-5 5h-24z" fill="url(#gg)" stroke="#8a8a8a" stroke-width="0.8"/><rect x="1266" y="101" width="14" height="14" fill="#9cc0e6" stroke="#6b8fb8" stroke-width="0.6"/><path d="M1269 108l4-3 4 5" stroke="#fff" stroke-width="1.4" fill="none"/>
<path d="M1296 84h18l8 8v24h-26z" fill="#fafafa" stroke="#999" stroke-width="0.8"/><path d="M1314 84v8h8z" fill="#f2cf7a"/><path d="M1291 93h14M1301 88l6 5-6 5" stroke="#3b86d0" stroke-width="2.6" fill="none"/><rect x="1294" y="103" width="30" height="13" fill="#e0ad3a"/><circle cx="1299.5" cy="109.5" r="3" fill="#6b4a10"/><text x="1302" y="114" font-size="9" font-weight="bold" fill="#fff3d0" font-family="Liberation Sans">SVG</text>
<path d="M1341 89l5-5h20v22l-5 5h-20z" fill="url(#gg)" stroke="#8a8a8a" stroke-width="0.8"/><path d="M1336 106q1-8 10-8v-4l7 6-7 6v-4q-6 0-10 4z" fill="#333"/>
<rect x="1378" y="84" width="30" height="29" fill="#5b9ad8"/><path d="M1378 113l8-12 7 6 6-8 9 14z" fill="#3a78be"/><circle cx="1400" cy="91" r="3" fill="#f4f8fc"/>
<!-- SELECT -->
<rect x="1439" y="81" width="38" height="37" fill="#3b8bd4"/>
<path d="M1463 99v13l3-3 2 5 2-1-2-5h4z" fill="#fff" stroke="#555" stroke-width="0.6"/>
<!-- dropdown arrows -->
<g fill="#666"><path d="M80 95h5l-2.5 3z"/><path d="M272 126h5l-2.5 3z"/><path d="M464 126h5l-2.5 3z"/><path d="M657 126h5l-2.5 3z"/><path d="M892 126h5l-2.5 3z"/><path d="M1013 126h5l-2.5 3z"/><path d="M1115 126h5l-2.5 3z"/><path d="M1204 126h5l-2.5 3z"/><path d="M1344 126h5l-2.5 3z"/><path d="M1474 126h5l-2.5 3z"/></g>
</svg>

<div class="a" style="left:0;top:146px;width:300px;height:25px;background:#efefef;border:1px solid #dcdcdc;border-left:none"></div>
<div class="t" style="left:24px;top:153px;font-size:11px;color:#8a8a8a;letter-spacing:-0.7px">BROWSER</div>
<div class="a" style="left:35px;top:176px;width:189px;height:20px;background:#f1f1f1"></div>
<div class="a" style="left:60px;top:178px;width:118px;height:16px;background:#a4a4a4"></div>
<div class="t" style="left:93.5px;top:180.7px;font-size:11px;font-weight:bold;color:#fff">Shell Chair v7</div>
<div class="a" style="left:53px;top:200px;width:130px;height:20px;background:#f1f1f1"></div>
<div class="t" style="left:82px;top:204.6px;font-size:11.5px;letter-spacing:-0.25px;color:#5c5c5c">Document Settings</div>
<div class="a" style="left:53px;top:224px;width:110px;height:20px;background:#f1f1f1"></div>
<div class="t" style="left:86px;top:228.6px;font-size:11.5px;letter-spacing:-0.25px;color:#5c5c5c">Named Views</div>
<div class="a" style="left:53px;top:248px;width:99px;height:20px;background:#f1f1f1"></div>
<div class="t" style="left:111px;top:252.6px;font-size:11.5px;letter-spacing:-0.25px;color:#5c5c5c">Origin</div>
<div class="a" style="left:53px;top:272px;width:103px;height:20px;background:#f1f1f1"></div>
<div class="t" style="left:111px;top:276.6px;font-size:11.5px;letter-spacing:-0.25px;color:#5c5c5c">Bodies</div>
<div class="a" style="left:71px;top:296px;width:90px;height:20px;background:#f1f1f1"></div>
<div class="t" style="left:129px;top:300.6px;font-size:11.5px;letter-spacing:-0.25px;color:#5c5c5c">Seat</div>
<div class="a" style="left:71px;top:320px;width:115px;height:20px;background:#f1f1f1"></div>
<div class="t" style="left:129px;top:324.6px;font-size:11.5px;letter-spacing:-0.25px;color:#5c5c5c">Front Top</div>
<div class="a" style="left:71px;top:344px;width:131px;height:20px;background:#f1f1f1"></div>
<div class="t" style="left:129px;top:348.6px;font-size:11.5px;letter-spacing:-0.25px;color:#5c5c5c">Front Bottom</div>
<div class="a" style="left:71px;top:368px;width:111px;height:20px;background:#f1f1f1"></div>
<div class="t" style="left:129px;top:372.6px;font-size:11.5px;letter-spacing:-0.25px;color:#5c5c5c">Rear Top</div>
<div class="a" style="left:71px;top:392px;width:127px;height:20px;background:#f1f1f1"></div>
<div class="t" style="left:129px;top:396.6px;font-size:11.5px;letter-spacing:-0.25px;color:#5c5c5c">Rear Bottom</div>
<div class="a" style="left:71px;top:416px;width:119px;height:20px;background:#f1f1f1"></div>
<div class="t" style="left:129px;top:420.6px;font-size:11.5px;letter-spacing:-0.25px;color:#5c5c5c">Seat Back</div>
<div class="a" style="left:71px;top:440px;width:123px;height:20px;background:#f1f1f1"></div>
<div class="t" style="left:129px;top:444.6px;font-size:11.5px;letter-spacing:-0.25px;color:#5c5c5c">Back Foam</div>
<div class="a" style="left:71px;top:464px;width:119px;height:20px;background:#f1f1f1"></div>
<div class="t" style="left:129px;top:468.6px;font-size:11.5px;letter-spacing:-0.25px;color:#5c5c5c">Seat Foam</div>
<div class="a" style="left:53px;top:488px;width:115px;height:20px;background:#f1f1f1"></div>
<div class="t" style="left:111px;top:492.6px;font-size:11.5px;letter-spacing:-0.25px;color:#5c5c5c">Sketches</div>
<div class="a" style="left:71px;top:512px;width:123px;height:20px;background:#f1f1f1"></div>
<div class="t" style="left:129px;top:516.6px;font-size:11.5px;letter-spacing:-0.25px;color:#5c5c5c">SideProfile1</div>
<div class="a" style="left:71px;top:536px;width:127px;height:20px;background:#f1f1f1"></div>
<div class="t" style="left:129px;top:540.6px;font-size:11.5px;letter-spacing:-0.25px;color:#5c5c5c">SideProfile2</div>
<div class="a" style="left:71px;top:560px;width:115px;height:20px;background:#f1f1f1"></div>
<div class="t" style="left:129px;top:564.6px;font-size:11.5px;letter-spacing:-0.25px;color:#5c5c5c">Rear Trim</div>
<div class="a" style="left:71px;top:584px;width:127px;height:20px;background:#f1f1f1"></div>
<div class="t" style="left:129px;top:588.6px;font-size:11.5px;letter-spacing:-0.25px;color:#5c5c5c">FrontProfile1</div>
<div class="a" style="left:71px;top:608px;width:131px;height:20px;background:#f1f1f1"></div>
<div class="t" style="left:129px;top:612.6px;font-size:11.5px;letter-spacing:-0.25px;color:#5c5c5c">FrontProfile2</div>
<div class="a" style="left:71px;top:632px;width:115px;height:20px;background:#f1f1f1"></div>
<div class="t" style="left:129px;top:636.6px;font-size:11.5px;letter-spacing:-0.25px;color:#5c5c5c">Seat Trim</div>
<div class="a" style="left:71px;top:656px;width:131px;height:20px;background:#f1f1f1"></div>
<div class="t" style="left:129px;top:660.6px;font-size:11.5px;letter-spacing:-0.25px;color:#5c5c5c">FrontLegTrim</div>
<div class="a" style="left:71px;top:680px;width:151px;height:20px;background:#f1f1f1"></div>
<div class="t" style="left:129px;top:684.6px;font-size:11.5px;letter-spacing:-0.25px;color:#5c5c5c">Seat Back Profile</div>
<div class="a" style="left:71px;top:704px;width:119px;height:20px;background:#f1f1f1"></div>
<div class="t" style="left:129px;top:708.6px;font-size:11.5px;letter-spacing:-0.25px;color:#5c5c5c">Seat Back</div>
<div class="a" style="left:71px;top:728px;width:135px;height:20px;background:#f1f1f1"></div>
<div class="t" style="left:129px;top:732.6px;font-size:11.5px;letter-spacing:-0.25px;color:#5c5c5c">Seat Pad Trim</div>
<div class="a" style="left:53px;top:753px;width:130px;height:20px;background:#f1f1f1"></div>
<div class="t" style="left:111px;top:757.6px;font-size:11.5px;letter-spacing:-0.25px;color:#5c5c5c">Construction</div>
<svg class="a" style="left:0;top:140px" width="300" height="640" viewBox="0 140 300 640">
<defs><linearGradient id="bodyG" x1="0" y1="0" x2="0.3" y2="1"><stop offset="0" stop-color="#fafafa"/><stop offset="1" stop-color="#cfd2d8"/></linearGradient></defs>
<path d="M4 158.5l4.5-3v6zM9 158.5l4.5-3v6z" fill="#333"/>
<circle cx="282.5" cy="158" r="5" fill="#222"/><rect x="279.5" y="157.2" width="6" height="1.6" fill="#eee"/>
<path d="M15.5 192.5h11.5v-12z" fill="#6a6a6a" stroke="#444" stroke-width="0.8"/>
<ellipse cx="45.5" cy="186" rx="7.2" ry="4.2" fill="none" stroke="#9a9a9a" stroke-width="1.6"/><circle cx="45.5" cy="186" r="2.2" fill="#9a9a9a"/>
<rect x="64" y="179" width="14" height="14" rx="2.5" fill="#f0f0f0" stroke="#555" stroke-width="1"/>
<circle cx="188" cy="186" r="6.5" fill="#d6cf4a"/><circle cx="191" cy="190" r="2" fill="#fff" stroke="#777" stroke-width="0.8"/><text x="185" y="189.5" font-size="8" fill="#fff" font-family="Liberation Sans">M</text>
<circle cx="210" cy="186" r="6" fill="none" stroke="#333" stroke-width="1.3"/><circle cx="210" cy="186" r="2.3" fill="#222"/>
<path d="M36 203l8.5 7-8.5 7z" fill="#fff" stroke="#555" stroke-width="1.4"/>
<circle cx="62.5" cy="210" r="4.5" fill="none" stroke="#8a8a8a" stroke-width="3"/><rect x="61.3" y="202.5" width="2.4" height="3" fill="#8a8a8a" transform="rotate(0 62.5 210)"/><rect x="61.3" y="202.5" width="2.4" height="3" fill="#8a8a8a" transform="rotate(45 62.5 210)"/><rect x="61.3" y="202.5" width="2.4" height="3" fill="#8a8a8a" transform="rotate(90 62.5 210)"/><rect x="61.3" y="202.5" width="2.4" height="3" fill="#8a8a8a" transform="rotate(135 62.5 210)"/><rect x="61.3" y="202.5" width="2.4" height="3" fill="#8a8a8a" transform="rotate(180 62.5 210)"/><rect x="61.3" y="202.5" width="2.4" height="3" fill="#8a8a8a" transform="rotate(225 62.5 210)"/><rect x="61.3" y="202.5" width="2.4" height="3" fill="#8a8a8a" transform="rotate(270 62.5 210)"/><rect x="61.3" y="202.5" width="2.4" height="3" fill="#8a8a8a" transform="rotate(315 62.5 210)"/>
<path d="M36 227l8.5 7-8.5 7z" fill="#fff" stroke="#555" stroke-width="1.4"/>
<path d="M56 228h6l1.5 2h8.5v10h-16z" fill="#a3a3a3"/><rect x="56" y="230.5" width="16" height="1" fill="#bdbdbd"/>
<path d="M36 251l8.5 7-8.5 7z" fill="#fff" stroke="#555" stroke-width="1.4"/>
<ellipse cx="63.5" cy="258" rx="7.2" ry="4.2" fill="none" stroke="#b8b8b8" stroke-width="1.6"/><circle cx="63.5" cy="258" r="2.2" fill="#b8b8b8"/><path d="M58 253l11 10" stroke="#b8b8b8" stroke-width="1.3"/>
<path d="M80 252h6l1.5 2h8.5v10h-16z" fill="#a3a3a3"/><rect x="80" y="254.5" width="16" height="1" fill="#bdbdbd"/>
<path d="M34 289h12v-15z" fill="#777" stroke="#444" stroke-width="0.8"/>
<ellipse cx="63.5" cy="282" rx="7.2" ry="4.2" fill="none" stroke="#9a9a9a" stroke-width="1.6"/><circle cx="63.5" cy="282" r="2.2" fill="#9a9a9a"/>
<path d="M80 276h6l1.5 2h8.5v10h-16z" fill="#a3a3a3"/><rect x="80" y="278.5" width="16" height="1" fill="#bdbdbd"/>
<ellipse cx="81.5" cy="306" rx="7.2" ry="4.2" fill="none" stroke="#9a9a9a" stroke-width="1.6"/><circle cx="81.5" cy="306" r="2.2" fill="#9a9a9a"/>
<rect x="100.5" y="298.5" width="13" height="15" rx="3.5" fill="url(#bodyG)" stroke="#777" stroke-width="1.2"/>
<ellipse cx="81.5" cy="330" rx="7.2" ry="4.2" fill="none" stroke="#9a9a9a" stroke-width="1.6"/><circle cx="81.5" cy="330" r="2.2" fill="#9a9a9a"/>
<rect x="100.5" y="322.5" width="13" height="15" rx="3.5" fill="url(#bodyG)" stroke="#777" stroke-width="1.2"/>
<ellipse cx="81.5" cy="354" rx="7.2" ry="4.2" fill="none" stroke="#9a9a9a" stroke-width="1.6"/><circle cx="81.5" cy="354" r="2.2" fill="#9a9a9a"/>
<rect x="100.5" y="346.5" width="13" height="15" rx="3.5" fill="url(#bodyG)" stroke="#777" stroke-width="1.2"/>
<ellipse cx="81.5" cy="378" rx="7.2" ry="4.2" fill="none" stroke="#9a9a9a" stroke-width="1.6"/><circle cx="81.5" cy="378" r="2.2" fill="#9a9a9a"/>
<rect x="100.5" y="370.5" width="13" height="15" rx="3.5" fill="url(#bodyG)" stroke="#777" stroke-width="1.2"/>
<ellipse cx="81.5" cy="402" rx="7.2" ry="4.2" fill="none" stroke="#9a9a9a" stroke-width="1.6"/><circle cx="81.5" cy="402" r="2.2" fill="#9a9a9a"/>
<rect x="100.5" y="394.5" width="13" height="15" rx="3.5" fill="url(#bodyG)" stroke="#777" stroke-width="1.2"/>
<ellipse cx="81.5" cy="426" rx="7.2" ry="4.2" fill="none" stroke="#9a9a9a" stroke-width="1.6"/><circle cx="81.5" cy="426" r="2.2" fill="#9a9a9a"/>
<rect x="100.5" y="418.5" width="13" height="15" rx="3.5" fill="url(#bodyG)" stroke="#777" stroke-width="1.2"/>
<ellipse cx="81.5" cy="450" rx="7.2" ry="4.2" fill="none" stroke="#9a9a9a" stroke-width="1.6"/><circle cx="81.5" cy="450" r="2.2" fill="#9a9a9a"/>
<rect x="100.5" y="442.5" width="13" height="15" rx="3.5" fill="url(#bodyG)" stroke="#777" stroke-width="1.2"/>
<ellipse cx="81.5" cy="474" rx="7.2" ry="4.2" fill="none" stroke="#9a9a9a" stroke-width="1.6"/><circle cx="81.5" cy="474" r="2.2" fill="#9a9a9a"/>
<rect x="100.5" y="466.5" width="13" height="15" rx="3.5" fill="url(#bodyG)" stroke="#777" stroke-width="1.2"/>
<path d="M34 505h12v-15z" fill="#777" stroke="#444" stroke-width="0.8"/>
<ellipse cx="63.5" cy="498" rx="7.2" ry="4.2" fill="none" stroke="#9a9a9a" stroke-width="1.6"/><circle cx="63.5" cy="498" r="2.2" fill="#9a9a9a"/>
<path d="M80 492h6l1.5 2h8.5v10h-16z" fill="#a3a3a3"/><rect x="80" y="494.5" width="16" height="1" fill="#bdbdbd"/>
<ellipse cx="81.5" cy="522" rx="7.2" ry="4.2" fill="none" stroke="#b8b8b8" stroke-width="1.6"/><circle cx="81.5" cy="522" r="2.2" fill="#b8b8b8"/><path d="M76 517l11 10" stroke="#b8b8b8" stroke-width="1.3"/>
<path d="M101 515h12M101 515v14M101 529h5" stroke="#6a6a6a" stroke-width="1" stroke-dasharray="2 1.5" fill="none"/><circle cx="101" cy="515" r="1.2" fill="#555"/><circle cx="113" cy="515" r="1.2" fill="#555"/><circle cx="101" cy="529" r="1.2" fill="#555"/><path d="M113 516v4" stroke="#6a6a6a" stroke-width="1"/><rect x="109" y="524.5" width="6" height="5.5" fill="#d96a62"/><path d="M110.3 524.5v-1.8a1.7 1.7 0 0 1 3.4 0v1.8" stroke="#d96a62" stroke-width="1" fill="none"/>
<ellipse cx="81.5" cy="546" rx="7.2" ry="4.2" fill="none" stroke="#b8b8b8" stroke-width="1.6"/><circle cx="81.5" cy="546" r="2.2" fill="#b8b8b8"/><path d="M76 541l11 10" stroke="#b8b8b8" stroke-width="1.3"/>
<path d="M101 539h12M101 539v14M101 553h5" stroke="#6a6a6a" stroke-width="1" stroke-dasharray="2 1.5" fill="none"/><circle cx="101" cy="539" r="1.2" fill="#555"/><circle cx="113" cy="539" r="1.2" fill="#555"/><circle cx="101" cy="553" r="1.2" fill="#555"/><path d="M113 540v4" stroke="#6a6a6a" stroke-width="1"/><rect x="109" y="548.5" width="6" height="5.5" fill="#d96a62"/><path d="M110.3 548.5v-1.8a1.7 1.7 0 0 1 3.4 0v1.8" stroke="#d96a62" stroke-width="1" fill="none"/>
<ellipse cx="81.5" cy="570" rx="7.2" ry="4.2" fill="none" stroke="#b8b8b8" stroke-width="1.6"/><circle cx="81.5" cy="570" r="2.2" fill="#b8b8b8"/><path d="M76 565l11 10" stroke="#b8b8b8" stroke-width="1.3"/>
<path d="M101 563h12M101 563v14M101 577h5" stroke="#6a6a6a" stroke-width="1" stroke-dasharray="2 1.5" fill="none"/><circle cx="101" cy="563" r="1.2" fill="#555"/><circle cx="113" cy="563" r="1.2" fill="#555"/><circle cx="101" cy="577" r="1.2" fill="#555"/><path d="M113 564v4" stroke="#6a6a6a" stroke-width="1"/><rect x="109" y="572.5" width="6" height="5.5" fill="#d96a62"/><path d="M110.3 572.5v-1.8a1.7 1.7 0 0 1 3.4 0v1.8" stroke="#d96a62" stroke-width="1" fill="none"/>
<ellipse cx="81.5" cy="594" rx="7.2" ry="4.2" fill="none" stroke="#b8b8b8" stroke-width="1.6"/><circle cx="81.5" cy="594" r="2.2" fill="#b8b8b8"/><path d="M76 589l11 10" stroke="#b8b8b8" stroke-width="1.3"/>
<path d="M101 587h12M101 587v14M101 601h5" stroke="#6a6a6a" stroke-width="1" stroke-dasharray="2 1.5" fill="none"/><circle cx="101" cy="587" r="1.2" fill="#555"/><circle cx="113" cy="587" r="1.2" fill="#555"/><circle cx="101" cy="601" r="1.2" fill="#555"/><path d="M113 588v4" stroke="#6a6a6a" stroke-width="1"/><rect x="109" y="596.5" width="6" height="5.5" fill="#d96a62"/><path d="M110.3 596.5v-1.8a1.7 1.7 0 0 1 3.4 0v1.8" stroke="#d96a62" stroke-width="1" fill="none"/>
<ellipse cx="81.5" cy="618" rx="7.2" ry="4.2" fill="none" stroke="#b8b8b8" stroke-width="1.6"/><circle cx="81.5" cy="618" r="2.2" fill="#b8b8b8"/><path d="M76 613l11 10" stroke="#b8b8b8" stroke-width="1.3"/>
<path d="M101 611h12M101 611v14M101 625h5" stroke="#6a6a6a" stroke-width="1" stroke-dasharray="2 1.5" fill="none"/><circle cx="101" cy="611" r="1.2" fill="#555"/><circle cx="113" cy="611" r="1.2" fill="#555"/><circle cx="101" cy="625" r="1.2" fill="#555"/><path d="M113 612v4" stroke="#6a6a6a" stroke-width="1"/><rect x="109" y="620.5" width="6" height="5.5" fill="#d96a62"/><path d="M110.3 620.5v-1.8a1.7 1.7 0 0 1 3.4 0v1.8" stroke="#d96a62" stroke-width="1" fill="none"/>
<ellipse cx="81.5" cy="642" rx="7.2" ry="4.2" fill="none" stroke="#b8b8b8" stroke-width="1.6"/><circle cx="81.5" cy="642" r="2.2" fill="#b8b8b8"/><path d="M76 637l11 10" stroke="#b8b8b8" stroke-width="1.3"/>
<path d="M101 635h12M101 635v14M101 649h5" stroke="#6a6a6a" stroke-width="1" stroke-dasharray="2 1.5" fill="none"/><circle cx="101" cy="635" r="1.2" fill="#555"/><circle cx="113" cy="635" r="1.2" fill="#555"/><circle cx="101" cy="649" r="1.2" fill="#555"/><path d="M113 636v4" stroke="#6a6a6a" stroke-width="1"/><rect x="109" y="644.5" width="6" height="5.5" fill="#d96a62"/><path d="M110.3 644.5v-1.8a1.7 1.7 0 0 1 3.4 0v1.8" stroke="#d96a62" stroke-width="1" fill="none"/>
<ellipse cx="81.5" cy="666" rx="7.2" ry="4.2" fill="none" stroke="#b8b8b8" stroke-width="1.6"/><circle cx="81.5" cy="666" r="2.2" fill="#b8b8b8"/><path d="M76 661l11 10" stroke="#b8b8b8" stroke-width="1.3"/>
<path d="M101 659h12M101 659v14M101 673h5" stroke="#6a6a6a" stroke-width="1" stroke-dasharray="2 1.5" fill="none"/><circle cx="101" cy="659" r="1.2" fill="#555"/><circle cx="113" cy="659" r="1.2" fill="#555"/><circle cx="101" cy="673" r="1.2" fill="#555"/><path d="M113 660v4" stroke="#6a6a6a" stroke-width="1"/><rect x="109" y="668.5" width="6" height="5.5" fill="#d96a62"/><path d="M110.3 668.5v-1.8a1.7 1.7 0 0 1 3.4 0v1.8" stroke="#d96a62" stroke-width="1" fill="none"/>
<ellipse cx="81.5" cy="690" rx="7.2" ry="4.2" fill="none" stroke="#b8b8b8" stroke-width="1.6"/><circle cx="81.5" cy="690" r="2.2" fill="#b8b8b8"/><path d="M76 685l11 10" stroke="#b8b8b8" stroke-width="1.3"/>
<path d="M101 683h12M101 683v14M101 697h5" stroke="#6a6a6a" stroke-width="1" stroke-dasharray="2 1.5" fill="none"/><circle cx="101" cy="683" r="1.2" fill="#555"/><circle cx="113" cy="683" r="1.2" fill="#555"/><circle cx="101" cy="697" r="1.2" fill="#555"/><path d="M113 684v4" stroke="#6a6a6a" stroke-width="1"/><rect x="109" y="692.5" width="6" height="5.5" fill="#d96a62"/><path d="M110.3 692.5v-1.8a1.7 1.7 0 0 1 3.4 0v1.8" stroke="#d96a62" stroke-width="1" fill="none"/>
<ellipse cx="81.5" cy="714" rx="7.2" ry="4.2" fill="none" stroke="#b8b8b8" stroke-width="1.6"/><circle cx="81.5" cy="714" r="2.2" fill="#b8b8b8"/><path d="M76 709l11 10" stroke="#b8b8b8" stroke-width="1.3"/>
<path d="M101 707h12M101 707v14M101 721h5" stroke="#6a6a6a" stroke-width="1" stroke-dasharray="2 1.5" fill="none"/><circle cx="101" cy="707" r="1.2" fill="#555"/><circle cx="113" cy="707" r="1.2" fill="#555"/><circle cx="101" cy="721" r="1.2" fill="#555"/><path d="M113 708v4" stroke="#6a6a6a" stroke-width="1"/><path d="M108 721l5-5 2 2-5 5z" fill="#e8a84a"/>
<ellipse cx="81.5" cy="738" rx="7.2" ry="4.2" fill="none" stroke="#9a9a9a" stroke-width="1.6"/><circle cx="81.5" cy="738" r="2.2" fill="#9a9a9a"/>
<path d="M101 731h12M101 731v14M101 745h5" stroke="#6a6a6a" stroke-width="1" stroke-dasharray="2 1.5" fill="none"/><circle cx="101" cy="731" r="1.2" fill="#555"/><circle cx="113" cy="731" r="1.2" fill="#555"/><circle cx="101" cy="745" r="1.2" fill="#555"/><path d="M113 732v4" stroke="#6a6a6a" stroke-width="1"/><rect x="109" y="740.5" width="6" height="5.5" fill="#d96a62"/><path d="M110.3 740.5v-1.8a1.7 1.7 0 0 1 3.4 0v1.8" stroke="#d96a62" stroke-width="1" fill="none"/>
<path d="M36 756l8.5 7-8.5 7z" fill="#fff" stroke="#555" stroke-width="1.4"/>
<ellipse cx="63.5" cy="763" rx="7.2" ry="4.2" fill="none" stroke="#9a9a9a" stroke-width="1.6"/><circle cx="63.5" cy="763" r="2.2" fill="#9a9a9a"/>
<path d="M80 757h6l1.5 2h8.5v10h-16z" fill="#a3a3a3"/><rect x="80" y="759.5" width="16" height="1" fill="#bdbdbd"/>
</svg>
<div class="a" style="left:0;top:1005px;width:299px;height:25px;background:#c9c9c9;border:1px solid #b9b9b9;border-left:none"></div>
<div class="t" style="left:23px;top:1012px;font-size:10px;color:#6a6a6a">COMMENTS</div>
<svg class="a" style="left:276px;top:1011px" width="13" height="13"><circle cx="6.5" cy="6.5" r="5" fill="#222"/><path d="M6.5 4v5M4 6.5h5" stroke="#ddd" stroke-width="1.3"/></svg>
<div class="a" style="left:0;top:1034px;width:1920px;height:41px;background:linear-gradient(#b6b6b6,#b2b2b2 30px,#adadad)"></div>
<div class="a" style="left:0;top:1034px;width:1920px;height:2px;background:#acacac"></div>
<div class="a" style="left:839px;top:1004px;width:237px;height:23px;background:#c6c6c6;border-radius:2px"></div>
<svg class="a" style="left:0;top:990px" width="1920" height="85" viewBox="0 990 1920 85">
<defs><linearGradient id="tb" x1="0" y1="0" x2="0" y2="1"><stop offset="0" stop-color="#7ab0e0"/><stop offset="1" stop-color="#3d7fc2"/></linearGradient></defs>
<g fill="none" stroke="#555" stroke-width="1.1">
<ellipse cx="850" cy="1016" rx="6" ry="8"/><ellipse cx="850" cy="1016" rx="9" ry="3.5" stroke="#6aa0d0"/>
<rect x="875.5" y="1011" width="15" height="11"/><rect x="878.5" y="1014.5" width="9" height="4" fill="#888"/><path d="M877 1011l3-3M888 1011l2-3M881 1010l6-2"/>
<path d="M904 1022q-3-3-3-7l1-1 2 2v-8l1.5-1 1.5 1v6v-8l1.5-1 1.5 1v8v-7l1.5-1 1.5 1v7v-5l1.5-1 1.5 1v7q0 5-4 7z"/>
<circle cx="932" cy="1015" r="4.5" stroke-width="1.6"/><path d="M935 1018l4 4" stroke-width="2.4"/><path d="M940 1008v5M937.5 1010.5h5M938 1014h4"/>
<circle cx="959" cy="1015" r="5.5" stroke-width="1.6"/><rect x="956.5" y="1012.5" width="5" height="5"/><path d="M963 1019l4 4" stroke-width="2.4"/>
</g>
<rect x="986" y="1008" width="16" height="12" fill="#6e9ed0" stroke="#555" stroke-width="1.2"/><rect x="989" y="1011" width="10" height="6" fill="#a9c8ea"/><rect x="991" y="1021" width="6" height="3" fill="#777"/>
<rect x="1017.5" y="1008.5" width="16" height="15" fill="#cfcfcf" stroke="#777" stroke-width="1.2"/><path d="M1020.5 1008.5v15M1023.5 1008.5v15M1026.5 1008.5v15M1029.5 1008.5v15M1017.5 1011.5h16M1017.5 1014.5h16M1017.5 1017.5h16M1017.5 1020.5h16" stroke="#808080" stroke-width="0.9"/>
<rect x="1048" y="1008" width="16" height="16" fill="#5a8cc4"/><path d="M1056 1008v16M1048 1016h16" stroke="#c6c6c6" stroke-width="1.4"/><rect x="1050" y="1010" width="4.5" height="4.5" fill="#a8c4e4"/><rect x="1058" y="1010" width="4.5" height="4.5" fill="#a8c4e4"/><rect x="1050" y="1018" width="4.5" height="4.5" fill="#a8c4e4"/><rect x="1058" y="1018" width="4.5" height="4.5" fill="#a8c4e4"/>
<g fill="#444"><path d="M863 1015h5l-2.5 3z"/><path d="M975 1015h5l-2.5 3z"/><path d="M1005 1015h5l-2.5 3z"/><path d="M1036 1015h5l-2.5 3z"/><path d="M1067 1015h5l-2.5 3z"/></g>
<g fill="#4a4a4a"><rect x="6" y="1052" width="2" height="13"/><path d="M17 1052v13l-8-6.5z"/>
<path d="M30 1058.5l9-6v13z"/><rect x="40" y="1056" width="2" height="5"/>
<path d="M56 1052l11 6.5-11 6.5z"/>
<path d="M92 1058.5l-9-6v13z"/><rect x="80" y="1056" width="2" height="5"/>
<path d="M106 1052l9 6.5-9 6.5z"/><rect x="115" y="1052" width="2" height="13"/></g>
<rect x="26" y="1065" width="1862" height="6.5" fill="#dadada"/>
<rect x="1393" y="1064" width="4" height="8" fill="#b4b4b4"/>
<rect x="27" y="1065" width="141" height="6.5" fill="#e8321e"/><rect x="172" y="1065" width="174" height="6.5" fill="#e8321e"/><rect x="350" y="1065" width="88" height="6.5" fill="#e8321e"/>
<rect x="149.0" y="1071" width="1" height="4" fill="#9a9a9a"/>
<rect x="173.1" y="1071" width="1" height="4" fill="#9a9a9a"/>
<rect x="197.2" y="1071" width="1" height="4" fill="#9a9a9a"/>
<rect x="221.3" y="1071" width="1" height="4" fill="#9a9a9a"/>
<rect x="245.4" y="1071" width="1" height="4" fill="#9a9a9a"/>
<rect x="269.5" y="1071" width="1" height="4" fill="#9a9a9a"/>
<rect x="293.6" y="1071" width="1" height="4" fill="#9a9a9a"/>
<rect x="317.7" y="1071" width="1" height="4" fill="#9a9a9a"/>
<rect x="341.8" y="1071" width="1" height="4" fill="#9a9a9a"/>
<rect x="365.9" y="1071" width="1" height="4" fill="#9a9a9a"/>
<rect x="390.0" y="1071" width="1" height="4" fill="#9a9a9a"/>
<rect x="414.1" y="1071" width="1" height="4" fill="#9a9a9a"/>
<rect x="438.2" y="1071" width="1" height="4" fill="#9a9a9a"/>
<rect x="462.3" y="1071" width="1" height="4" fill="#9a9a9a"/>
<rect x="486.4" y="1071" width="1" height="4" fill="#9a9a9a"/>
<rect x="510.5" y="1071" width="1" height="4" fill="#9a9a9a"/>
<rect x="534.6" y="1071" width="1" height="4" fill="#9a9a9a"/>
<rect x="558.7" y="1071" width="1" height="4" fill="#9a9a9a"/>
<rect x="582.8" y="1071" width="1" height="4" fill="#9a9a9a"/>
<rect x="606.9" y="1071" width="1" height="4" fill="#9a9a9a"/>
<rect x="631.0" y="1071" width="1" height="4" fill="#9a9a9a"/>
<rect x="655.1" y="1071" width="1" height="4" fill="#9a9a9a"/>
<rect x="679.2" y="1071" width="1" height="4" fill="#9a9a9a"/>
<rect x="703.3" y="1071" width="1" height="4" fill="#9a9a9a"/>
<rect x="727.4" y="1071" width="1" height="4" fill="#9a9a9a"/>
<rect x="751.5" y="1071" width="1" height="4" fill="#9a9a9a"/>
<rect x="775.6" y="1071" width="1" height="4" fill="#9a9a9a"/>
<rect x="799.7" y="1071" width="1" height="4" fill="#9a9a9a"/>
<rect x="823.8" y="1071" width="1" height="4" fill="#9a9a9a"/>
<rect x="847.9" y="1071" width="1" height="4" fill="#9a9a9a"/>
<rect x="872.0" y="1071" width="1" height="4" fill="#9a9a9a"/>
<rect x="896.1" y="1071" width="1" height="4" fill="#9a9a9a"/>
<rect x="920.2" y="1071" width="1" height="4" fill="#9a9a9a"/>
<rect x="944.3" y="1071" width="1" height="4" fill="#9a9a9a"/>
<rect x="968.4" y="1071" width="1" height="4" fill="#9a9a9a"/>
<rect x="992.5" y="1071" width="1" height="4" fill="#9a9a9a"/>
<rect x="1016.6" y="1071" width="1" height="4" fill="#9a9a9a"/>
<rect x="1040.7" y="1071" width="1" height="4" fill="#9a9a9a"/>
<rect x="1064.8" y="1071" width="1" height="4" fill="#9a9a9a"/>
<rect x="1088.9" y="1071" width="1" height="4" fill="#9a9a9a"/>
<rect x="1113.0" y="1071" width="1" height="4" fill="#9a9a9a"/>
<rect x="1137.1" y="1071" width="1" height="4" fill="#9a9a9a"/>
<rect x="1161.2" y="1071" width="1" height="4" fill="#9a9a9a"/>
<rect x="1185.3" y="1071" width="1" height="4" fill="#9a9a9a"/>
<rect x="1209.4" y="1071" width="1" height="4" fill="#9a9a9a"/>
<rect x="1233.5" y="1071" width="1" height="4" fill="#9a9a9a"/>
<rect x="1257.6" y="1071" width="1" height="4" fill="#9a9a9a"/>
<rect x="1281.7" y="1071" width="1" height="4" fill="#9a9a9a"/>
<rect x="1305.8" y="1071" width="1" height="4" fill="#9a9a9a"/>
<path d="M1310 1044h13l-5 7v24h-3v-24z" fill="#555"/>
<g opacity="0.82">
<rect x="142.0" y="1050" width="13" height="13" fill="none" stroke="#7c7c7c" stroke-width="0.9"/><path d="M145.0 1060v-6h6" fill="none" stroke="#8a8a8a" stroke-width="0.8" stroke-dasharray="1.5 1"/><path d="M148.0 1062l6-6 2 2-6 6z" fill="#d8a050"/>
<rect x="166.1" y="1050" width="13" height="13" fill="none" stroke="#7c7c7c" stroke-width="0.9"/><path d="M169.1 1060v-6h6" fill="none" stroke="#8a8a8a" stroke-width="0.8" stroke-dasharray="1.5 1"/><path d="M172.1 1062l6-6 2 2-6 6z" fill="#d8a050"/>
<path d="M190.2 1054l3-3h9l-3 3z" fill="#8cb8e4"/><rect x="190.2" y="1054" width="9" height="10" fill="#4a86c6"/><path d="M199.2 1054l3-3v10l-3 3z" fill="#3a6ea8"/><path d="M203.7 1050v12" stroke="#333" stroke-width="0.8"/>
<path d="M214.3 1054l3-3h9l-3 3z" fill="#8cb8e4"/><rect x="214.3" y="1054" width="9" height="10" fill="#4a86c6"/><path d="M223.3 1054l3-3v10l-3 3z" fill="#3a6ea8"/><path d="M227.8 1050v12" stroke="#333" stroke-width="0.8"/>
<path d="M239.4 1054l4-3v12l-4 3z" fill="#ddd" stroke="#888" stroke-width="0.5"/><path d="M243.4 1052l3-2v13l-3 3z" fill="#5aa86a"/><path d="M248.4 1052l3-2v12l-3 3z" fill="#d89a6a"/>
<path d="M262.5 1052l2-2h11v6h-13z" fill="#4d8ccc"/><rect x="262.5" y="1057" width="13" height="7" fill="#e0e0e0" stroke="#999" stroke-width="0.5"/>
<rect x="286.6" y="1050" width="13" height="13" fill="none" stroke="#7c7c7c" stroke-width="0.9"/><path d="M289.6 1060v-6h6" fill="none" stroke="#8a8a8a" stroke-width="0.8" stroke-dasharray="1.5 1"/><path d="M292.6 1062l6-6 2 2-6 6z" fill="#d8a050"/>
<path d="M310.7 1054l3-3h9l-3 3z" fill="#8cb8e4"/><rect x="310.7" y="1054" width="9" height="10" fill="#4a86c6"/><path d="M319.7 1054l3-3v10l-3 3z" fill="#3a6ea8"/><path d="M324.2 1050v12" stroke="#333" stroke-width="0.8"/>
<rect x="334.8" y="1050" width="13" height="13" fill="none" stroke="#7c7c7c" stroke-width="0.9"/><path d="M337.8 1060v-6h6" fill="none" stroke="#8a8a8a" stroke-width="0.8" stroke-dasharray="1.5 1"/><path d="M340.8 1062l6-6 2 2-6 6z" fill="#d8a050"/>
<rect x="358.9" y="1050" width="13" height="13" fill="none" stroke="#7c7c7c" stroke-width="0.9"/><path d="M361.9 1060v-6h6" fill="none" stroke="#8a8a8a" stroke-width="0.8" stroke-dasharray="1.5 1"/><path d="M364.9 1062l6-6 2 2-6 6z" fill="#d8a050"/>
<path d="M383.0 1054l3-3h9l-3 3z" fill="#8cb8e4"/><rect x="383.0" y="1054" width="9" height="10" fill="#4a86c6"/><path d="M392.0 1054l3-3v10l-3 3z" fill="#3a6ea8"/><path d="M396.5 1050v12" stroke="#333" stroke-width="0.8"/>
<path d="M407.1 1054l3-3h9l-3 3z" fill="#8cb8e4"/><rect x="407.1" y="1054" width="9" height="10" fill="#4a86c6"/><path d="M416.1 1054l3-3v10l-3 3z" fill="#3a6ea8"/><path d="M420.6 1050v12" stroke="#333" stroke-width="0.8"/>
<path d="M431.2 1054l3-3h9l-3 3z" fill="#8cb8e4"/><rect x="431.2" y="1054" width="9" height="10" fill="#4a86c6"/><path d="M440.2 1054l3-3v10l-3 3z" fill="#3a6ea8"/><path d="M444.7 1050v12" stroke="#333" stroke-width="0.8"/>
<rect x="455.3" y="1050" width="13" height="13" fill="none" stroke="#7c7c7c" stroke-width="0.9"/><path d="M458.3 1060v-6h6" fill="none" stroke="#8a8a8a" stroke-width="0.8" stroke-dasharray="1.5 1"/><path d="M461.3 1062l6-6 2 2-6 6z" fill="#d8a050"/>
<circle cx="488.4" cy="1057.5" r="3.8" fill="#8aa4c8" stroke="#555" stroke-width="0.8"/><path d="M479.4 1057.5h6M479.4 1057.5l3-3M479.4 1057.5l3 3" stroke="#111" stroke-width="1.6"/>
<circle cx="512.5" cy="1057.5" r="3.8" fill="#8aa4c8" stroke="#555" stroke-width="0.8"/><path d="M503.5 1057.5h6M503.5 1057.5l3-3M503.5 1057.5l3 3" stroke="#111" stroke-width="1.6"/>
<rect x="527.6" y="1050" width="13" height="13" fill="none" stroke="#7c7c7c" stroke-width="0.9"/><path d="M530.6 1060v-6h6" fill="none" stroke="#8a8a8a" stroke-width="0.8" stroke-dasharray="1.5 1"/><path d="M533.6 1062l6-6 2 2-6 6z" fill="#d8a050"/>
<path d="M551.7 1054l3-3h9l-3 3z" fill="#8cb8e4"/><rect x="551.7" y="1054" width="9" height="10" fill="#4a86c6"/><path d="M560.7 1054l3-3v10l-3 3z" fill="#3a6ea8"/><path d="M565.2 1050v12" stroke="#333" stroke-width="0.8"/>
<path d="M581.8 1050l6 14h-12z" fill="#c8c8c8" stroke="#888" stroke-width="0.6"/>
<path d="M599.9 1052l2-2h11v6h-13z" fill="#4d8ccc"/><rect x="599.9" y="1057" width="13" height="7" fill="#e0e0e0" stroke="#999" stroke-width="0.5"/>
<path d="M624.0 1052l2-2h11v6h-13z" fill="#4d8ccc"/><rect x="624.0" y="1057" width="13" height="7" fill="#e0e0e0" stroke="#999" stroke-width="0.5"/>
<path d="M648.1 1050h13v8q0 6-6.5 6t-6.5-6z" fill="#4d8ccc"/><ellipse cx="654.6" cy="1061" rx="3.5" ry="3" fill="#e0e0e0"/>
<path d="M672.2 1050h13v8q0 6-6.5 6t-6.5-6z" fill="#4d8ccc"/><ellipse cx="678.7" cy="1061" rx="3.5" ry="3" fill="#e0e0e0"/>
<path d="M696.3 1057l2-2h5v-5h6v8l-2 2h-5v4h-6z" fill="url(#tb)"/>
<path d="M720.4 1057l2-2h5v-5h6v8l-2 2h-5v4h-6z" fill="url(#tb)"/>
<path d="M744.5 1054l3-3h9l-3 3z" fill="#8cb8e4"/><rect x="744.5" y="1054" width="9" height="10" fill="#4a86c6"/><path d="M753.5 1054l3-3v10l-3 3z" fill="#3a6ea8"/><path d="M758.0 1050v12" stroke="#333" stroke-width="0.8"/>
<rect x="772.6" y="1050" width="10" height="10" fill="#ccc" stroke="#777" stroke-width="0.6"/><rect x="768.6" y="1054" width="10" height="10" fill="#e8e8e8" stroke="#777" stroke-width="0.6"/>
<path d="M792.7 1052l2-2h11v6h-13z" fill="#4d8ccc"/><rect x="792.7" y="1057" width="13" height="7" fill="#e0e0e0" stroke="#999" stroke-width="0.5"/>
<circle cx="825.8" cy="1057.5" r="3.8" fill="#8aa4c8" stroke="#555" stroke-width="0.8"/><path d="M816.8 1057.5h6M816.8 1057.5l3-3M816.8 1057.5l3 3" stroke="#111" stroke-width="1.6"/>
<circle cx="849.9" cy="1057.5" r="3.8" fill="#8aa4c8" stroke="#555" stroke-width="0.8"/><path d="M840.9 1057.5h6M840.9 1057.5l3-3M840.9 1057.5l3 3" stroke="#111" stroke-width="1.6"/>
<path d="M865.0 1060l12-8v4l-12 8z" fill="#d89a5a"/>
<rect x="889.1" y="1050" width="13" height="13" fill="none" stroke="#7c7c7c" stroke-width="0.9"/><path d="M892.1 1060v-6h6" fill="none" stroke="#8a8a8a" stroke-width="0.8" stroke-dasharray="1.5 1"/><path d="M895.1 1062l6-6 2 2-6 6z" fill="#d8a050"/>
<path d="M913.2 1054l3-3h9l-3 3z" fill="#8cb8e4"/><rect x="913.2" y="1054" width="9" height="10" fill="#4a86c6"/><path d="M922.2 1054l3-3v10l-3 3z" fill="#3a6ea8"/><path d="M926.7 1050v12" stroke="#333" stroke-width="0.8"/>
<rect x="937.3" y="1050" width="13" height="13" fill="none" stroke="#7c7c7c" stroke-width="0.9"/><path d="M940.3 1060v-6h6" fill="none" stroke="#8a8a8a" stroke-width="0.8" stroke-dasharray="1.5 1"/><path d="M943.3 1062l6-6 2 2-6 6z" fill="#d8a050"/>
<path d="M961.4 1054l3-3h9l-3 3z" fill="#8cb8e4"/><rect x="961.4" y="1054" width="9" height="10" fill="#4a86c6"/><path d="M970.4 1054l3-3v10l-3 3z" fill="#3a6ea8"/><path d="M974.9 1050v12" stroke="#333" stroke-width="0.8"/>
<path d="M985.5 1058q0-7 7-7l6 6-6 7z" fill="#d8904a"/>
<path d="M1009.6 1058q0-7 7-7l6 6-6 7z" fill="#d8904a"/>
<path d="M1034.7 1051q12 0 12 13h-4q0-9-8-9z" fill="#d8904a"/>
<path d="M1057.8 1051h13v13h-5v-8h-8z" fill="#d8904a"/>
<rect x="1082.9" y="1051" width="11" height="13" fill="#d8904a"/><path d="M1085.9 1054h5M1085.9 1057h5M1085.9 1060h5" stroke="#a86a2a" stroke-width="0.8"/>
<path d="M1106.0 1064v-8q0-6 6-6h2q5 0 5 5v9z" fill="#c8c8c8" stroke="#888" stroke-width="0.5"/><path d="M1107.0 1058l9-6 2 2-9 6z" fill="#4d8ccc"/>
<path d="M1130.1 1064v-8q0-6 6-6h2q5 0 5 5v9z" fill="#c8c8c8" stroke="#888" stroke-width="0.5"/><path d="M1137.1 1050q6 1 6 8h-3q0-4-3-5z" fill="#4d8ccc"/>
<path d="M1154.2 1064v-8q0-6 6-6h2q5 0 5 5v9z" fill="#c8c8c8" stroke="#888" stroke-width="0.5"/><path d="M1161.2 1050q6 1 6 8h-3q0-4-3-5z" fill="#4d8ccc"/>
<rect x="1178.3" y="1050" width="13" height="13" fill="none" stroke="#7c7c7c" stroke-width="0.9"/><path d="M1181.3 1060v-6h6" fill="none" stroke="#8a8a8a" stroke-width="0.8" stroke-dasharray="1.5 1"/><path d="M1184.3 1062l6-6 2 2-6 6z" fill="#d8a050"/>
<path d="M1204.4 1050l9 14M1213.4 1050l-9 14" stroke="#333" stroke-width="1.2"/><circle cx="1205.4" cy="1063" r="2" fill="none" stroke="#333"/><circle cx="1212.4" cy="1063" r="2" fill="none" stroke="#333"/>
<path d="M1226.5 1059l8-7 6 4-8 7z" fill="#6a9ad0" stroke="#777" stroke-width="0.5"/>
<path d="M1250.6 1064v-8q0-6 6-6h2q5 0 5 5v9z" fill="#c8c8c8" stroke="#888" stroke-width="0.5"/><path d="M1251.6 1058l9-6 2 2-9 6z" fill="#4d8ccc"/>
<path d="M1274.7 1064v-8q0-6 6-6h2q5 0 5 5v9z" fill="#c8c8c8" stroke="#888" stroke-width="0.5"/><path d="M1281.7 1050q6 1 6 8h-3q0-4-3-5z" fill="#4d8ccc"/>
<circle cx="1307.8" cy="1057.5" r="3.8" fill="#8aa4c8" stroke="#555" stroke-width="0.8"/><path d="M1298.8 1057.5h6M1298.8 1057.5l3-3M1298.8 1057.5l3 3" stroke="#111" stroke-width="1.6"/>
</g>
<path d="M1884 1005h3.5v45.5h-3.5z" fill="#a86a3e"/>
<path d="M1837.5 1004q0-7 7-7h35q4.5 0 4.5 4.5v35.5h-47z" fill="#e2843e"/>
<path d="M1837.5 1004q0-7 7-7h1v40h-8z" fill="#eea264"/>
<rect x="1842" y="1035.3" width="45.5" height="15.4" fill="#a86a3e"/>
<text x="1865.5" y="1027" font-size="29" font-weight="bold" fill="#fff" text-anchor="middle" font-family="Liberation Sans">F</text>
<text x="1865" y="1046.5" font-size="10" font-weight="bold" fill="#fdeede" text-anchor="middle" font-family="Liberation Sans">FUS</text>
<path d="M1899.5 1011a6.5 6.5 0 1 0 0 13h6.5v-6.5a6.5 6.5 0 0 0 -6.5 -6.5z" fill="#111"/><path d="M1895.5 1020q2-5 8-4.5" stroke="#ccc" stroke-width="1.6" fill="none"/>
<g transform="translate(1898.5 1058.5)"><circle r="4" fill="none" stroke="#6a6a6a" stroke-width="3"/><rect x="-1.2" y="-7" width="2.4" height="3" fill="#6a6a6a" transform="rotate(0)"/><rect x="-1.2" y="-7" width="2.4" height="3" fill="#6a6a6a" transform="rotate(45)"/><rect x="-1.2" y="-7" width="2.4" height="3" fill="#6a6a6a" transform="rotate(90)"/><rect x="-1.2" y="-7" width="2.4" height="3" fill="#6a6a6a" transform="rotate(135)"/><rect x="-1.2" y="-7" width="2.4" height="3" fill="#6a6a6a" transform="rotate(180)"/><rect x="-1.2" y="-7" width="2.4" height="3" fill="#6a6a6a" transform="rotate(225)"/><rect x="-1.2" y="-7" width="2.4" height="3" fill="#6a6a6a" transform="rotate(270)"/><rect x="-1.2" y="-7" width="2.4" height="3" fill="#6a6a6a" transform="rotate(315)"/></g>
</svg>
</body></html>
